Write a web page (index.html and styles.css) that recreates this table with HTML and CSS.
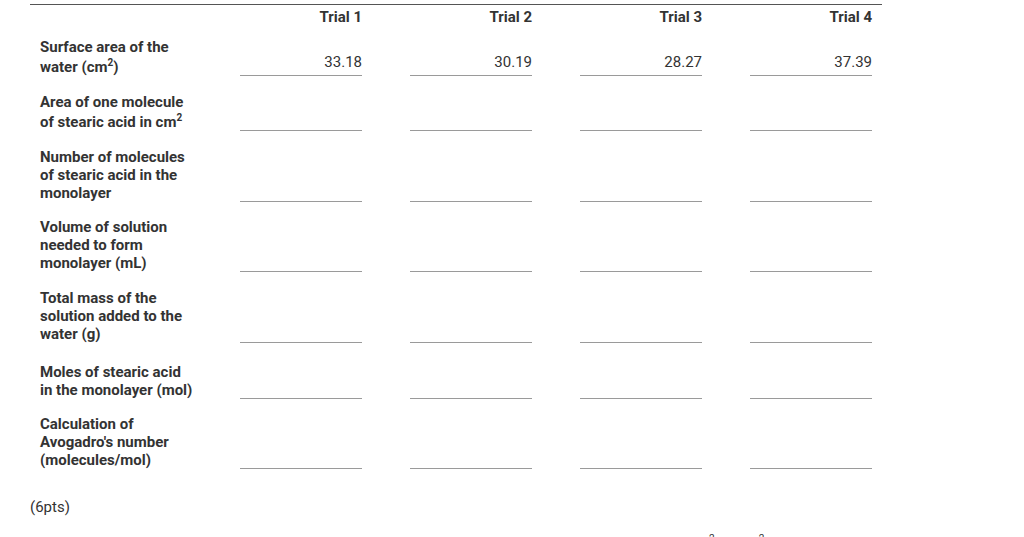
FILE: index.html
```html
<!DOCTYPE html>
<html>
<head>
<meta charset="utf-8">
<link rel="stylesheet" href="styles.css">
</head>
<body>
<div class="sheet">
  <div class="row head">
    <div class="label"></div>
    <div class="th">Trial 1</div>
    <div class="th">Trial 2</div>
    <div class="th">Trial 3</div>
    <div class="th">Trial 4</div>
  </div>
  <div class="row r1">
    <div class="label">Surface area of the<span class="ln2">water (cm<sup>2</sup>)</span></div>
    <div class="cell">33.18</div>
    <div class="cell">30.19</div>
    <div class="cell">28.27</div>
    <div class="cell">37.39</div>
  </div>
  <div class="row">
    <div class="label">Area of one molecule<span class="ln2">of stearic acid in cm<sup>2</sup></span></div>
    <div class="cell"></div><div class="cell"></div><div class="cell"></div><div class="cell"></div>
  </div>
  <div class="row">
    <div class="label">Number of molecules<br>of stearic acid in the<br>monolayer</div>
    <div class="cell"></div><div class="cell"></div><div class="cell"></div><div class="cell"></div>
  </div>
  <div class="row tight">
    <div class="label">Volume of solution<br>needed to form<br>monolayer (mL)</div>
    <div class="cell"></div><div class="cell"></div><div class="cell"></div><div class="cell"></div>
  </div>
  <div class="row">
    <div class="label">Total mass of the<br>solution added to the<br>water (g)</div>
    <div class="cell"></div><div class="cell"></div><div class="cell"></div><div class="cell"></div>
  </div>
  <div class="row loose">
    <div class="label">Moles of stearic acid<br>in the monolayer (mol)</div>
    <div class="cell"></div><div class="cell"></div><div class="cell"></div><div class="cell"></div>
  </div>
  <div class="row tight">
    <div class="label">Calculation of<br>Avogadro's number<br>(molecules/mol)</div>
    <div class="cell"></div><div class="cell"></div><div class="cell"></div><div class="cell"></div>
  </div>
</div>
<p class="pts">(6pts)</p>
<p class="next"><span class="frag">cm<sup>2</sup></span><span class="frag">cm<sup>2</sup></span></p>
</body>
</html>
```
FILE: styles.css
```css
html, body {
  margin: 0;
  padding: 0;
  background: #fff;
}
body {
  font-family: Roboto, "Liberation Sans", Arial, sans-serif;
  font-size: 15px;
  line-height: 18px;
  color: #333;
}
.sheet {
  margin: 4px 0 0 30px;
  width: 852px;
  border-top: 1px solid #555;
  padding: 3px 10px 0 10px;
  box-sizing: border-box;
}
.row {
  display: grid;
  grid-template-columns: 152px repeat(4, 122px);
  column-gap: 48px;
  align-items: end;
  margin-top: 17px;
}
.row.head {
  margin-top: 0;
}
.row.r1 {
  margin-top: 12px;
}
.row.tight {
  margin-top: 16px;
}
.row.loose {
  margin-top: 20px;
}
.label {
  font-weight: 700;
  white-space: nowrap;
}
.ln2 {
  display: block;
  margin-top: 2px;
}
sup {
  font-size: 10px;
  line-height: 0;
  vertical-align: 6px;
}
.th {
  font-weight: 700;
  text-align: right;
}
.cell {
  align-self: stretch;
  display: flex;
  align-items: flex-end;
  justify-content: flex-end;
  padding-bottom: 4px;
  border-bottom: 1px solid #9a9a9a;
  box-sizing: border-box;
}
.pts {
  margin: 29px 0 0 30px;
}
.next {
  margin: 20px 0 0 688px;
  display: flex;
  gap: 23px;
}
.frag sup {
  vertical-align: 8px;
}
```
